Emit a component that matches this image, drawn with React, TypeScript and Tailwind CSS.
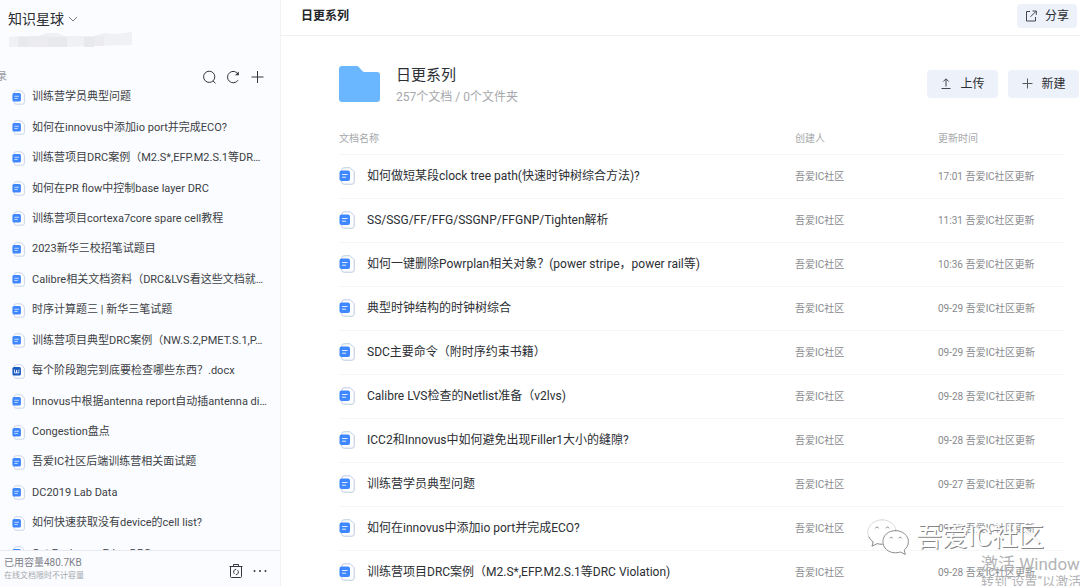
const sidebarDocs = [
  { title: "训练营学员典型问题" },
  { title: "如何在innovus中添加io port并完成ECO?" },
  { title: "训练营项目DRC案例（M2.S*,EFP.M2.S.1等DR…" },
  { title: "如何在PR flow中控制base layer DRC" },
  { title: "训练营项目cortexa7core spare cell教程" },
  { title: "2023新华三校招笔试题目" },
  { title: "Calibre相关文档资料（DRC&LVS看这些文档就…" },
  { title: "时序计算题三 | 新华三笔试题" },
  { title: "训练营项目典型DRC案例（NW.S.2,PMET.S.1,P…" },
  { title: "每个阶段跑完到底要检查哪些东西？.docx", word: true },
  { title: "Innovus中根据antenna report自动插antenna di…" },
  { title: "Congestion盘点" },
  { title: "吾爱IC社区后端训练营相关面试题" },
  { title: "DC2019 Lab Data" },
  { title: "如何快速获取没有device的cell list?" },
  { title: "Get Enclosure Edge DRC" },
];

const docs = [
  { title: "如何做短某段clock tree path(快速时钟树综合方法)?", time: "17:01" },
  { title: "SS/SSG/FF/FFG/SSGNP/FFGNP/Tighten解析", time: "11:31" },
  { title: "如何一键删除Powrplan相关对象？(power stripe，power rail等)", time: "10:36" },
  { title: "典型时钟结构的时钟树综合", time: "09-29" },
  { title: "SDC主要命令（附时序约束书籍）", time: "09-29" },
  { title: "Calibre LVS检查的Netlist准备（v2lvs)", time: "09-28" },
  { title: "ICC2和Innovus中如何避免出现Filler1大小的缝隙?", time: "09-28" },
  { title: "训练营学员典型问题", time: "09-27" },
  { title: "如何在innovus中添加io port并完成ECO?", time: "09-27" },
  { title: "训练营项目DRC案例（M2.S*,EFP.M2.S.1等DRC Violation)", time: "09-28" },
];

function DocIcon({ className, word }: { className: string; word?: boolean }) {
  return (
    <svg viewBox="0 0 16 18" className={className} fill="none" aria-hidden="true">
      <path
        d="M5 .8h6.2l4 4V15a2.2 2.2 0 0 1-2.2 2.2H5A2.2 2.2 0 0 1 2.8 15V3A2.2 2.2 0 0 1 5 .8Z"
        fill="#fff"
        stroke="#bccae3"
      />
      <rect x=".5" y="3.5" width="10.5" height="10.5" rx="2" fill={word ? "#185abd" : "#3f87ff"} />
      {word ? (
        <path d="M3 6.5v4.2h2.700V7.1v3.600h2.800V6.500" stroke="#fff" />
      ) : (
        <path d="M3 7.500h5.500M3 10.200h4" stroke="#fff" strokeOpacity=".85" />
      )}
    </svg>
  );
}

function WechatIcon() {
  return (
    <svg
      viewBox="0 0 42 36"
      className="h-9 w-[42px] shrink-0"
      fill="#fff"
      stroke="#8c8c8c"
      strokeLinecap="round"
      strokeLinejoin="round"
      aria-hidden="true"
    >
      <path
        d="M15 .8C7 .8.8 6.3.8 13.3c0 4 2 7.4 5.4 9.7L5 27.2l5.2-2.6c1.6.4 3.2.7 4.8.7 8 0 14.2-5 14.2-12S23 .8 15 .8Z"
        stroke="#d0d0d0"
        strokeWidth=".8"
      />
      <path d="M2 18c1 2 2.400 3.600 4.200 5L5 27.200l5.200-2.600c1.600.4 3.200.7 4.800.7" />
      <path d="M8.500 9c.5-1.400 2.500-1.400 3 0M19 9c.5-1.400 2.500-1.400 3 0" />
      <path d="M28.500 11.600c-7.200 0-12.600 4.800-12.600 11 0 6.400 5.400 11.200 12.600 11.200 1.800 0 3.400-.3 4.900-.8l5 2.500-1.300-4.400c2.600-2 4.300-5 4.300-8.500 0-6.200-5.700-11-12.900-11Z" />
      <path d="M23 19c.4-1.200 2.200-1.200 2.600 0M32 19c.4-1.200 2.200-1.200 2.600 0" />
    </svg>
  );
}

function Sidebar() {
  return (
    <aside className="flex w-[281px] shrink-0 flex-col overflow-hidden border-r border-[#f0f2f6] bg-[#fbfcff]">
      <div className="px-2 pt-2">
        <button className="flex items-center gap-1 text-sm leading-[22px] text-[#2b2e33]">
          知识星球
          <svg viewBox="0 0 10 10" className="size-[10px]" fill="none" stroke="#777b82" aria-hidden="true">
            <path d="M1 3l4 4 4-4" />
          </svg>
        </button>
        <svg viewBox="0 0 124 16" className="mt-0.5 h-4 w-[124px]" aria-hidden="true">
          <path d="M1 5l9-1h20l8-3h12l6 3h30l10-3 10 1 18-2v13l-40 1-28 1-6-1-8 1H1Z" fill="#f0f1f4" />
          <path d="M10 5h10v10H10zM40 5h19v10H40zM76 5h10v10H76z" fill="#e8e9ed" />
          <path d="M20 4h20v11H20zM86 4h10v10H86z" fill="#ececf0" />
        </svg>
      </div>

      <div className="mt-5 flex h-[18px] items-center justify-between pr-[15px]">
        <span className="-ml-1 text-[11px] text-[#9a9da3]">录</span>
        <div className="flex gap-2 text-[#33363b]">
          <button aria-label="搜索">
            <svg viewBox="0 0 16 16" className="size-4" fill="none" stroke="currentColor" aria-hidden="true">
              <circle cx="8.2" cy="7.8" r="5.6" />
              <path d="M12 12l2.500 2.300" />
            </svg>
          </button>
          <button aria-label="刷新">
            <svg viewBox="0 0 16 16" className="size-4" fill="none" stroke="currentColor" aria-hidden="true">
              <path d="M13.200 5.300A5.700 5.700 0 1 0 13 11.200" />
              <path d="M13.800 2.500v3.800H10Z" fill="currentColor" stroke="none" />
            </svg>
          </button>
          <button aria-label="添加">
            <svg viewBox="0 0 16 16" className="size-4" fill="none" stroke="currentColor" aria-hidden="true">
              <path d="M8.500 2v12M2.500 8h12" />
            </svg>
          </button>
        </div>
      </div>

      <nav className="mt-1 min-h-0 flex-1 overflow-hidden">
        <ul className="-mt-2 grid h-[487px] auto-rows-fr">
          {sidebarDocs.map((doc) => (
            <li key={doc.title} className="flex items-center">
              <a href="#" className="flex w-full items-center gap-[7px] pl-3 text-[11px] leading-4 text-[#3c3f45]">
                <DocIcon word={doc.word} className="h-[15px] w-[13px] shrink-0" />
                <span className="whitespace-nowrap">{doc.title}</span>
              </a>
            </li>
          ))}
        </ul>
      </nav>

      <footer className="flex h-9 shrink-0 items-center justify-between border-t border-[#e8eaef] pr-3 pl-1">
        <div>
          <p className="text-[10px] leading-[14px] text-[#7d8087]">已用容量480.7KB</p>
          <p className="text-[8px] leading-3 text-[#a4a7ad]">在线文档限时不计容量</p>
        </div>
        <div className="flex items-center gap-2 pt-1 text-[#33363b]">
          <button aria-label="回收站">
            <svg viewBox="0 0 16 16" className="size-4" fill="none" stroke="currentColor" aria-hidden="true">
              <path d="M1.500 3.500h13M5.500 3.500v-2h5v2M2.500 3.500v10a1 1 0 0 0 1 1h9a1 1 0 0 0 1-1v-10" />
              <path d="M6.400 10.800A2.700 2.700 0 0 1 8.200 6.200M9.600 7.200a2.700 2.700 0 0 1-1.800 4.600" />
            </svg>
          </button>
          <button aria-label="更多">
            <svg viewBox="0 0 16 16" className="size-4" fill="currentColor" aria-hidden="true">
              <circle cx="2.500" cy="8" r="1" />
              <circle cx="8" cy="8" r="1" />
              <circle cx="13.500" cy="8" r="1" />
            </svg>
          </button>
        </div>
      </footer>
    </aside>
  );
}

export default function App() {
  return (
    <div className="relative flex h-screen overflow-hidden bg-white font-['Roboto','Noto_Sans_CJK_SC',sans-serif] text-[#2b2e33]">
      <Sidebar />

      <main className="min-w-0 flex-1">
        <header className="flex h-9 items-center justify-between border-b border-[#f0f1f3] pr-[3px] pb-[3px] pl-5">
          <h1 className="text-xs font-bold text-[#222529]">日更系列</h1>
          <button className="flex h-6 items-center gap-2 rounded-sm bg-[#edf1fa] px-2 text-xs">
            <svg viewBox="0 0 12 12" className="size-3" fill="none" stroke="#44474d" aria-hidden="true">
              <path d="M5 1.500H1.500v9.500h9V7M7.500 1h3.800v3.800M11 1.300L5.500 6.800" />
            </svg>
            分享
          </button>
        </header>

        <section className="mt-7 flex items-start pr-px pl-[58px]">
          <svg viewBox="0 0 41 36" className="mt-0.5 h-9 w-[41px]" aria-hidden="true">
            <path
              d="M3 0h14.500a3 3 0 0 1 2.300 1l3.800 4.200a3 3 0 0 0 2.200.8H38a3 3 0 0 1 3 3v24a3 3 0 0 1-3 3H3a3 3 0 0 1-3-3V3a3 3 0 0 1 3-3Z"
              fill="#6ab6ff"
            />
          </svg>
          <div className="ml-4 flex-1">
            <h2 className="text-[15px] leading-[22px]">日更系列</h2>
            <p className="text-xs leading-[22px] text-[#a6a8ab]">257个文档 / 0个文件夹</p>
          </div>
          <div className="flex gap-[10px] pt-1.5 text-xs">
            <button className="flex h-7 w-[71px] items-center justify-center gap-2 rounded bg-[#edf1fa]">
              <svg viewBox="0 0 12 12" className="size-3" fill="none" stroke="#44474d" aria-hidden="true">
                <path d="M1.500 10.500h9M6 8.500V1M3.300 3.500L6 .8l2.700 2.700" />
              </svg>
              上传
            </button>
            <button className="flex h-7 w-[71px] items-center justify-center gap-2 rounded bg-[#edf1fa]">
              <svg viewBox="0 0 12 12" className="size-3" fill="none" stroke="#55585e" aria-hidden="true">
                <path d="M6.500 .5v10M1.500 5.500h10" />
              </svg>
              新建
            </button>
          </div>
        </section>

        <div className="mt-4 pr-[15px] pl-[58px]">
          <table className="w-full table-fixed border-collapse text-left text-[10px]">
            <thead className="text-[#a6a8ab]">
              <tr className="h-[30px] border-b border-[#f5f6f7]">
                <th className="font-normal">文档名称</th>
                <th className="w-[143px] font-normal">创建人</th>
                <th className="w-[127px] font-normal">更新时间</th>
              </tr>
            </thead>
            <tbody className="text-[#888a8e]">
              {docs.map((doc) => (
                <tr key={doc.title} className="h-11 border-b border-[#f5f6f7]">
                  <td>
                    <a href="#" className="flex items-center gap-3 text-xs text-[#2b2e33]">
                      <DocIcon className="h-[18px] w-4 shrink-0" />
                      {doc.title}
                    </a>
                  </td>
                  <td>吾爱IC社区</td>
                  <td>{doc.time} 吾爱IC社区更新</td>
                </tr>
              ))}
            </tbody>
          </table>
        </div>
      </main>

      <div className="pointer-events-none absolute right-9 bottom-[31px] flex items-center gap-[7px]">
        <WechatIcon />
        <span className="text-[26px] leading-9 text-white [text-shadow:1px_1px_0_#858585]">吾爱IC社区</span>
      </div>
      <div className="pointer-events-none absolute bottom-[-4px] left-[calc(100%-99px)] whitespace-nowrap text-[#b2b3b5]">
        <p className="text-[17px] leading-5">激活 Windows</p>
        <p className="text-[13px] leading-4">转到“设置”以激活 Windows。</p>
      </div>
    </div>
  );
}
